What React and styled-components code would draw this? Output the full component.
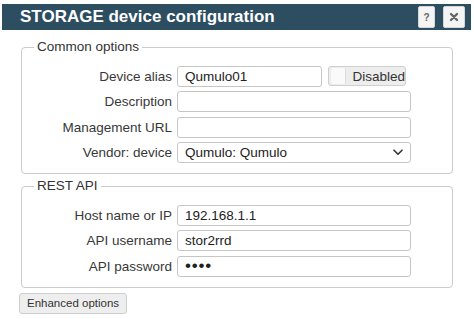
import React from 'react';
import styled, { createGlobalStyle } from 'styled-components';

const GlobalStyle = createGlobalStyle`
  body {
    margin: 0;
    background: #ffffff;
    font-family: "Liberation Sans", Arial, sans-serif;
    color: #333333;
  }
`;

const commonRows = [
    { label: 'Device alias', value: 'Qumulo01', kind: 'alias' },
    { label: 'Description', value: '' },
    { label: 'Management URL', value: '' },
    { label: 'Vendor: device', value: 'Qumulo: Qumulo', kind: 'select' },
];

const restRows = [
    { label: 'Host name or IP', value: '192.168.1.1' },
    { label: 'API username', value: 'stor2rrd' },
    { label: 'API password', value: '••••', kind: 'password' },
];

const Chevron = () => (
    <svg width="10" height="7" viewBox="0 0 10 7">
        <path d="M1 1.2 L5 5.2 L9 1.2" fill="none" stroke="#333" strokeWidth="1.6" strokeLinecap="round" strokeLinejoin="round" />
    </svg>
);

const CloseIcon = () => (
    <svg width="10" height="10" viewBox="0 0 10 10">
        <path d="M2 2 L8 8 M8 2 L2 8" stroke="#666" strokeWidth="2.4" strokeLinecap="round" />
    </svg>
);

const Field = ({ row }) => {
    if (row.kind === 'alias') {
        return (
            <AliasCell>
                <Input width={145}>{row.value}</Input>
                <ToggleButton>
                    <ToggleBox />
                    Disabled
                </ToggleButton>
            </AliasCell>
        );
    }
    if (row.kind === 'select') {
        return (
            <Input width={234}>
                {row.value}
                <SelectArrow><Chevron /></SelectArrow>
            </Input>
        );
    }
    return <Input width={234} dots={row.kind === 'password'}>{row.value}</Input>;
};

const Section = ({ legend, rows }) => (
    <Fieldset>
        <Legend>{legend}</Legend>
        <FormGrid>
            {rows.map(row => (
                <React.Fragment key={row.label}>
                    <Label>{row.label}</Label>
                    <Field row={row} />
                </React.Fragment>
            ))}
        </FormGrid>
    </Fieldset>
);

const App = () => (
    <>
        <GlobalStyle />
        <Dialog>
            <TitleBar>
                <Title>STORAGE device configuration</Title>
                <TitleButtons>
                    <IconButton>?</IconButton>
                    <IconButton><CloseIcon /></IconButton>
                </TitleButtons>
            </TitleBar>
            <Body>
                <Section legend="Common options" rows={commonRows} />
                <Section legend="REST API" rows={restRows} />
                <PlainButton>Enhanced options</PlainButton>
            </Body>
        </Dialog>
    </>
);

export default App;

const Dialog = styled.div`
  margin: 4px 3px 0 2px;
`;

const TitleBar = styled.div`
  height: 26px;
  background: #2d4d60;
  display: flex;
  align-items: center;
  justify-content: space-between;
  padding: 0 6px 0 18px;
`;

const Title = styled.span`
  color: #ffffff;
  font-weight: bold;
  font-size: 17px;
`;

const TitleButtons = styled.div`
  display: flex;
  gap: 8px;
`;

const IconButton = styled.div`
  width: 15px;
  height: 20px;
  background: #f4f4f4;
  border: 1px solid #d6d6d6;
  border-radius: 2px;
  display: flex;
  align-items: center;
  justify-content: center;
  font-size: 10px;
  font-weight: bold;
  color: #666;
  &:last-child {
    width: 20px;
  }
`;

const Body = styled.div`
  padding: 9px 0 0 19px;
`;

const Fieldset = styled.fieldset`
  width: 432px;
  box-sizing: border-box;
  margin: 0 0 4px;
  padding: 10px 0 10px;
  border: 1px solid #cbcbcb;
  border-radius: 4px;
  min-inline-size: 0;
`;

const Legend = styled.legend`
  margin-left: 12px;
  padding: 0 3px;
  font-size: 13.5px;
  line-height: 16px;
  color: #333;
`;

const FormGrid = styled.div`
  display: grid;
  grid-template-columns: 150px auto;
  column-gap: 5px;
  row-gap: 4.5px;
  align-items: center;
  padding-top: 0.5px;
`;

const Label = styled.div`
  text-align: right;
  font-size: 13.5px;
  color: #383838;
`;

const AliasCell = styled.div`
  display: flex;
  align-items: center;
  gap: 6px;
`;

const Input = styled.div`
  position: relative;
  width: ${({ width }) => width}px;
  height: 21px;
  box-sizing: border-box;
  border: 1px solid #c6c6c6;
  border-radius: 3px;
  background: #fff;
  padding: 0 7px;
  display: flex;
  align-items: center;
  font-size: ${({ dots }) => (dots ? '17px' : '13.5px')};
  letter-spacing: ${({ dots }) => (dots ? '0.8px' : '0')};
  color: #222;
`;

const SelectArrow = styled.span`
  position: absolute;
  right: 7px;
  top: 6px;
  display: flex;
`;

const ToggleButton = styled.div`
  width: 78px;
  height: 20px;
  box-sizing: border-box;
  border: 1px solid #cfcfcf;
  border-radius: 3px;
  background: #ededed;
  display: flex;
  align-items: center;
  gap: 6px;
  padding-left: 2px;
  font-size: 13.5px;
  color: #333;
`;

const ToggleBox = styled.span`
  width: 16px;
  height: 16px;
  background: #fafafa;
  border-right: 1px solid #dcdcdc;
  border-radius: 2px;
`;

const PlainButton = styled.div`
  display: inline-flex;
  align-items: center;
  height: 19px;
  margin: 1px 0 0 -2px;
  padding: 0 7px;
  background: #eeeeee;
  border: 1px solid #cfcfcf;
  border-radius: 3px;
  font-size: 11.5px;
  color: #333;
`;
